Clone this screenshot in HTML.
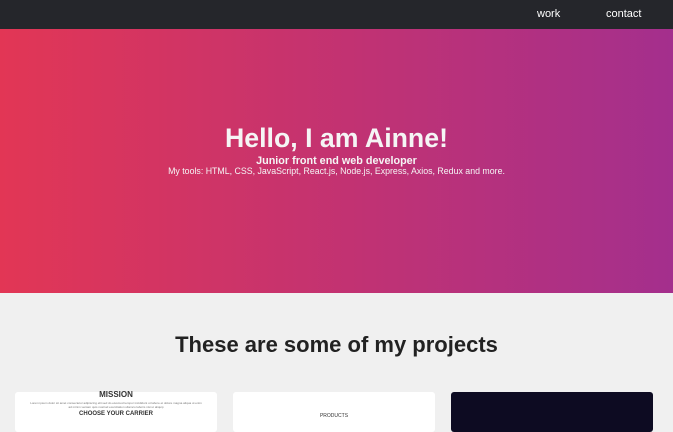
<!DOCTYPE html>
<html><head><style>
*{margin:0;padding:0;box-sizing:border-box}
body{width:673px;height:426px;overflow:hidden;background:#f0f0f0;font-family:"Liberation Sans",Arial,sans-serif}
.nav{height:29px;background:#25262b;position:relative;color:#fff;font-size:11px}
.nav span{position:absolute;top:8px}
.hero{height:264px;background:linear-gradient(90deg,#e23655,#a42f8d);color:#f5f5f5;text-align:center;position:relative}
h1{position:absolute;top:94px;width:100%;font-size:26.7px;font-weight:bold}
.sub{position:absolute;top:126px;width:100%;font-size:10.8px;font-weight:bold}
.tools{position:absolute;top:137px;width:100%;font-size:8.8px}
h2{position:absolute;top:332px;width:100%;text-align:center;font-size:22px;color:#222;font-weight:bold}
.card{position:absolute;top:392px;width:202px;height:40px;background:#fff;border-radius:3px;text-align:center;color:#333}
</style></head><body>
<div class="nav"><span style="left:537px">work</span><span style="left:606px">contact</span></div>
<div class="hero"><h1>Hello, I am Ainne!</h1><div class="sub">Junior front end web developer</div><div class="tools">My tools: HTML, CSS, JavaScript, React.js, Node.js, Express, Axios, Redux and more.</div></div>
<h2>These are some of my projects</h2>
<div class="card" style="left:15px"><div style="font-size:8px;font-weight:bold;margin-top:-2px">MISSION</div><div style="font-size:3px;line-height:4px;color:#777;padding:2px 15px">Lorem ipsum dolor sit amet consectetur adipiscing elit sed do eiusmod tempor incididunt ut labore et dolore magna aliqua ut enim ad minim veniam quis nostrud exercitation ullamco laboris nisi ut aliquip</div><div style="font-size:6px;font-weight:bold">CHOOSE YOUR CARRIER</div></div>
<div class="card" style="left:233px"><div style="font-size:5px;margin-top:21px">PRODUCTS</div></div>
<div class="card" style="left:451px;background:#0d0b22"></div>
</body></html>
